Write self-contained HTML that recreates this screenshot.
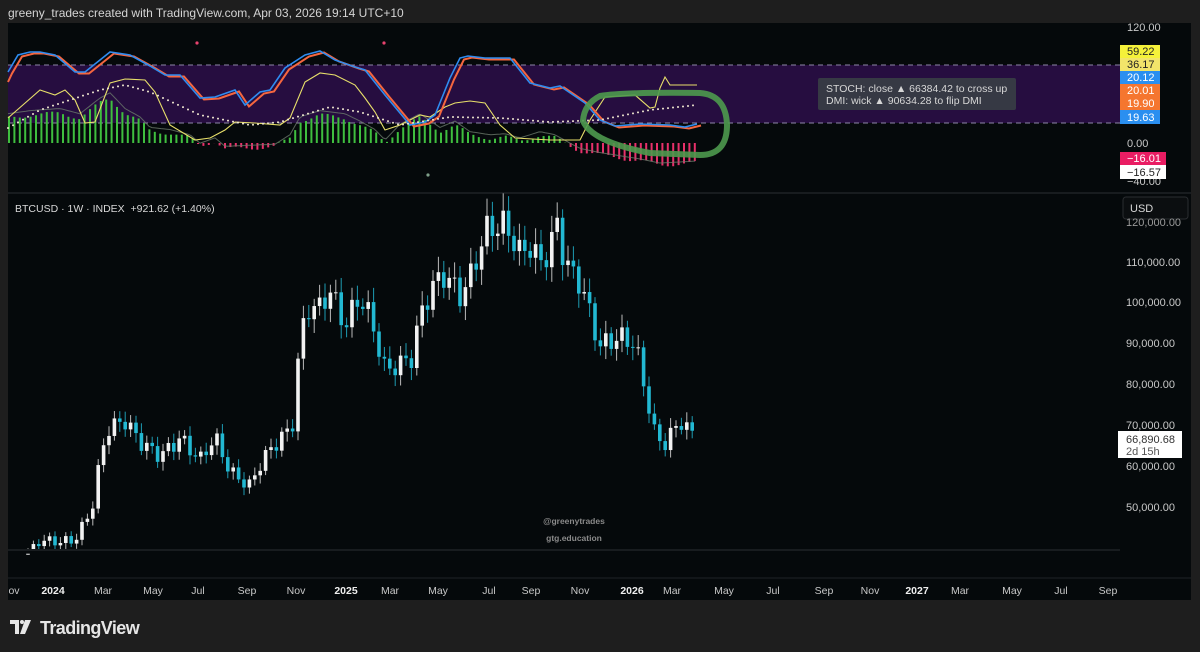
<!DOCTYPE html>
<html><head><meta charset="utf-8">
<style>
html,body{margin:0;padding:0;background:#1e1e1e;width:1200px;height:652px;overflow:hidden;font-family:"Liberation Sans",sans-serif;}
#hdr{position:absolute;left:8px;top:6px;font-size:12px;color:#d4d4d4;}
#chart{position:absolute;left:8px;top:23px;width:1183px;height:577px;background:#05090b;}
svg text{font-family:"Liberation Sans",sans-serif;}
</style></head><body>
<div id="hdr">greeny_trades created with TradingView.com, Apr 03, 2026 19:14 UTC+10</div>
<div id="chart"></div>
<svg id="main" width="1200" height="652" style="position:absolute;left:0;top:0">
  <rect x="8" y="65" width="1112" height="58" fill="#260d40"/>
  <line x1="8" y1="65" x2="1120" y2="65" stroke="#8f86a8" stroke-dasharray="5,4" stroke-width="1"/>
  <line x1="8" y1="123" x2="1120" y2="123" stroke="#8f86a8" stroke-dasharray="5,4" stroke-width="1"/>
  <g id="ind"></g>
  <circle cx="197" cy="43" r="1.6" fill="#e8436e"/>
  <circle cx="384" cy="43" r="1.6" fill="#e8436e"/>
  <circle cx="428" cy="175" r="1.6" fill="#7fa08a"/>
  <path d="M600 96 Q625 92 700 93 Q726 95 727 125 Q727 155 700 155 L650 153 Q592 142 583 121 Q584 104 600 96 Z" fill="none" stroke="#4e9a4e" stroke-width="6" opacity="0.9"/>
  <rect x="818" y="78" width="198" height="32" rx="2" fill="#363944"/>
  <text x="826" y="92" font-size="10.5" fill="#d6d6d6">STOCH: close ▲ 66384.42 to cross up</text>
  <text x="826" y="104" font-size="10.5" fill="#d6d6d6">DMI: wick ▲ 90634.28 to flip DMI</text>
  <text x="1127" y="31" font-size="11" fill="#c8c8c8">120.00</text>
  <rect x="1120" y="45" width="40" height="13" fill="#f5f13a"/><text x="1127" y="55" font-size="11" fill="#222">59.22</text>
  <rect x="1120" y="58" width="40" height="13" fill="#f2e46a"/><text x="1127" y="68" font-size="11" fill="#222">36.17</text>
  <rect x="1120" y="71" width="40" height="13" fill="#2a8ff0"/><text x="1127" y="81" font-size="11" fill="#fff">20.12</text>
  <rect x="1120" y="84" width="40" height="13" fill="#f5762f"/><text x="1127" y="94" font-size="11" fill="#fff">20.01</text>
  <rect x="1120" y="97" width="40" height="13" fill="#f5762f"/><text x="1127" y="107" font-size="11" fill="#fff">19.90</text>
  <rect x="1120" y="110" width="40" height="14" fill="#2a8ff0"/><text x="1127" y="121" font-size="11" fill="#fff">19.63</text>
  <text x="1127" y="147" font-size="11" fill="#c8c8c8">0.00</text>
  <text x="1127" y="185" font-size="11" fill="#c8c8c8">−40.00</text>
  <rect x="1120" y="152" width="46" height="13" fill="#e91d63"/><text x="1127" y="162" font-size="11" fill="#fff">−16.01</text>
  <rect x="1120" y="165" width="46" height="14" fill="#fff"/><text x="1127" y="176" font-size="11" fill="#222">−16.57</text>
  <line x1="8" y1="193" x2="1191" y2="193" stroke="#2a2f33" stroke-width="1"/>
  <text x="15" y="212" font-size="10.5" fill="#d8d8d8">BTCUSD · 1W · INDEX &#160;+921.62 (+1.40%)</text>
  <g id="cand"></g>
  <rect x="1123" y="197" width="65" height="22" rx="3" fill="#0b0e10" stroke="#2a2d30"/>
  <text x="1130" y="212" font-size="11" fill="#d8d8d8">USD</text>
  <text x="1126" y="226" font-size="11" fill="#9a9a9a">120,000.00</text>
  <text x="1126" y="266" font-size="11" fill="#c8c8c8">110,000.00</text>
  <text x="1126" y="306" font-size="11" fill="#c8c8c8">100,000.00</text>
  <text x="1126" y="347" font-size="11" fill="#c8c8c8">90,000.00</text>
  <text x="1126" y="388" font-size="11" fill="#c8c8c8">80,000.00</text>
  <text x="1126" y="429" font-size="11" fill="#c8c8c8">70,000.00</text>
  <text x="1126" y="470" font-size="11" fill="#c8c8c8">60,000.00</text>
  <text x="1126" y="511" font-size="11" fill="#c8c8c8">50,000.00</text>
  <rect x="1118" y="431" width="64" height="27" fill="#fff"/>
  <text x="1126" y="443" font-size="11" fill="#333">66,890.68</text>
  <text x="1126" y="455" font-size="11" fill="#555">2d 15h</text>
  <text x="574" y="524" font-size="8.5" font-weight="bold" fill="#8a8a8a" text-anchor="middle">@greenytrades</text>
  <text x="574" y="541" font-size="8.5" font-weight="bold" fill="#8a8a8a" text-anchor="middle">gtg.education</text>
  <line x1="8" y1="550" x2="1120" y2="550" stroke="#2a2f33" stroke-width="1"/>
  <line x1="8" y1="578" x2="1191" y2="578" stroke="#1f2427" stroke-width="1"/>
  <g font-size="10.5" fill="#c8c8c8" text-anchor="middle">
    <text x="14" y="594">ov</text>
    <text x="53" y="594" font-weight="bold" fill="#eee">2024</text>
    <text x="103" y="594">Mar</text><text x="153" y="594">May</text><text x="198" y="594">Jul</text>
    <text x="247" y="594">Sep</text><text x="296" y="594">Nov</text>
    <text x="346" y="594" font-weight="bold" fill="#eee">2025</text>
    <text x="390" y="594">Mar</text><text x="438" y="594">May</text><text x="489" y="594">Jul</text>
    <text x="531" y="594">Sep</text><text x="580" y="594">Nov</text>
    <text x="632" y="594" font-weight="bold" fill="#eee">2026</text>
    <text x="672" y="594">Mar</text><text x="724" y="594">May</text><text x="773" y="594">Jul</text>
    <text x="824" y="594">Sep</text><text x="870" y="594">Nov</text>
    <text x="917" y="594" font-weight="bold" fill="#eee">2027</text>
    <text x="960" y="594">Mar</text><text x="1012" y="594">May</text><text x="1061" y="594">Jul</text>
    <text x="1108" y="594">Sep</text>
  </g>
  <g fill="#e6e6e6">
    <path d="M10 620 H19 V634 H15 V624 H10 Z"/>
    <circle cx="22" cy="622" r="2"/>
    <path d="M25 620 H31 L25 634 H20 Z"/>
  </g>
  <text x="40" y="634" font-size="18" fill="#e6e6e6" font-weight="bold" letter-spacing="-0.6">TradingView</text>
</svg>
<script>
function interp(a,x){if(x<=a[0][0])return a[0][1];for(var i=1;i<a.length;i++){if(x<=a[i][0]){var t=(x-a[i-1][0])/(a[i][0]-a[i-1][0]);return a[i-1][1]+t*(a[i][1]-a[i-1][1]);}}return a[a.length-1][1];}
var NS="http://www.w3.org/2000/svg";
function el(g,tag,at){var e=document.createElementNS(NS,tag);for(var k in at)e.setAttribute(k,at[k]);g.appendChild(e);return e;}
function path(pts){return pts.map(function(p,i){return (i?'L':'M')+p[0].toFixed(1)+' '+p[1].toFixed(1);}).join(' ');}
var ind=document.getElementById('ind');
var hist=[[8,-25],[30,-28],[60,-30],[80,-25],[100,-40],[110,-45],[125,-30],[140,-22],[150,-12],[170,-10],[190,-5],[200,3],[215,-2],[225,6],[250,5],[275,4],[290,-5],[300,-22],[320,-28],[345,-25],[360,-18],[375,-10],[385,0],[400,-15],[420,-25],[440,-12],[455,-18],[470,-8],[490,-5],[505,-6],[520,-2],[540,-8],[555,-5],[570,3],[580,8],[600,12],[640,18],[660,22],[697,20]];
for(var x=9;x<=697;x+=5.4){var v=interp(hist,x)+Math.sin(x*1.3)*2;var up=v<0;el(ind,'rect',{x:x-1,y:up?143+v:143,width:2,height:Math.abs(v),fill:up?'#3fbf3f':'#e8306a'});}
var thin=[];for(var x=8;x<=697;x+=3){thin.push([x,143+interp(hist,x)*1.05-3]);}
el(ind,'path',{d:path(thin),fill:'none',stroke:'#6b7a6b','stroke-width':1,opacity:0.8});
var blue=[[8,72],[18,55],[30,52],[40,52],[55,55],[75,72],[85,72],[110,52],[130,55],[150,66],[165,75],[180,75],[200,98],[215,97],[235,90],[245,105],[260,92],[270,90],[285,68],[305,55],[320,51],[335,60],[355,67],[365,70],[385,95],[410,125],[425,122],[435,115],[450,78],[460,58],[468,56],[485,58],[510,58],[530,83],[550,88],[560,86],[585,103],[600,120],[615,126],[640,124],[670,125],[685,127],[697,124]];
var org=blue.map(function(p){return [p[0]+4,p[1]+1.5];});org.unshift([8,82]);
var yel=[[8,118],[40,90],[55,95],[65,90],[75,100],[85,123],[95,122],[110,83],[125,79],[145,80],[155,92],[170,125],[195,140],[210,138],[225,130],[235,122],[255,123],[280,125],[290,118],[305,82],[320,73],[335,75],[355,85],[365,98],[375,112],[385,130],[400,125],[420,115],[430,117],[445,107],[455,103],[470,101],[485,103],[500,125],[515,138],[550,140],[580,140],[590,120],[605,97],[635,95],[650,108],[655,107],[660,88],[665,77],[670,85],[697,85]];
el(ind,'path',{d:path(yel),fill:'none',stroke:'#e8e06a','stroke-width':1.1});
el(ind,'path',{d:path(org),fill:'none',stroke:'#f5663f','stroke-width':2});
el(ind,'path',{d:path(blue),fill:'none',stroke:'#2f8cf0','stroke-width':1.6});
var wd=[[8,128],[40,110],[70,100],[100,90],[125,85],[150,92],[200,115],[250,125],[280,122],[330,107],[360,112],[400,125],[450,117],[500,118],[550,122],[600,120],[650,110],[697,105]];
for(var x=8;x<=697;x+=5){el(ind,'circle',{cx:x,cy:interp(wd,x),r:1,fill:'#f0e8d0'});}
var c=document.getElementById('cand');
function py(p){return 262+(110000-p)*0.0041;}
var pa=[[25,37000],[40,42000],[75,43000],[85,47000],[95,52000],[100,62000],[108,68000],[125,70000],[140,66000],[160,64000],[180,68000],[200,61000],[215,66000],[230,58000],[250,56000],[262,63000],[280,68000],[292,69000],[300,90000],[308,97000],[320,97000],[330,102000],[345,95000],[360,104000],[372,97000],[385,84000],[400,84000],[412,85000],[420,95000],[432,103000],[445,108000],[460,104000],[470,108000],[485,118000],[505,117000],[520,110000],[530,113000],[540,110000],[550,115000],[557,122000],[565,112000],[580,106000],[590,97000],[600,88000],[620,90000],[635,90000],[645,80000],[655,69000],[665,67000],[680,72000],[690,68000],[697,67000]];
var prev=interp(pa,22);
for(var x=28;x<=697;x+=5.4){var cl=interp(pa,x)*(1+0.03*Math.sin(x*2.7)+0.02*Math.cos(x*1.1));var op=prev;var up=cl>=op;var hi=Math.max(op,cl)*(1+0.015+0.02*Math.abs(Math.sin(x*3.3)));var lo=Math.min(op,cl)*(1-0.015-0.02*Math.abs(Math.cos(x*2.1)));var col=up?'#f2f2f2':'#22b8d2';
el(c,'line',{x1:x,x2:x,y1:py(hi),y2:Math.min(py(lo),549),stroke:up?'#bbb':'#1d9cb3','stroke-width':1});
var yt=py(Math.max(op,cl)),yb=py(Math.min(op,cl));el(c,'rect',{x:x-1.8,y:yt,width:3.6,height:Math.max(1,Math.min(yb,549)-yt),fill:col});prev=cl;}
</script>
</body></html>
